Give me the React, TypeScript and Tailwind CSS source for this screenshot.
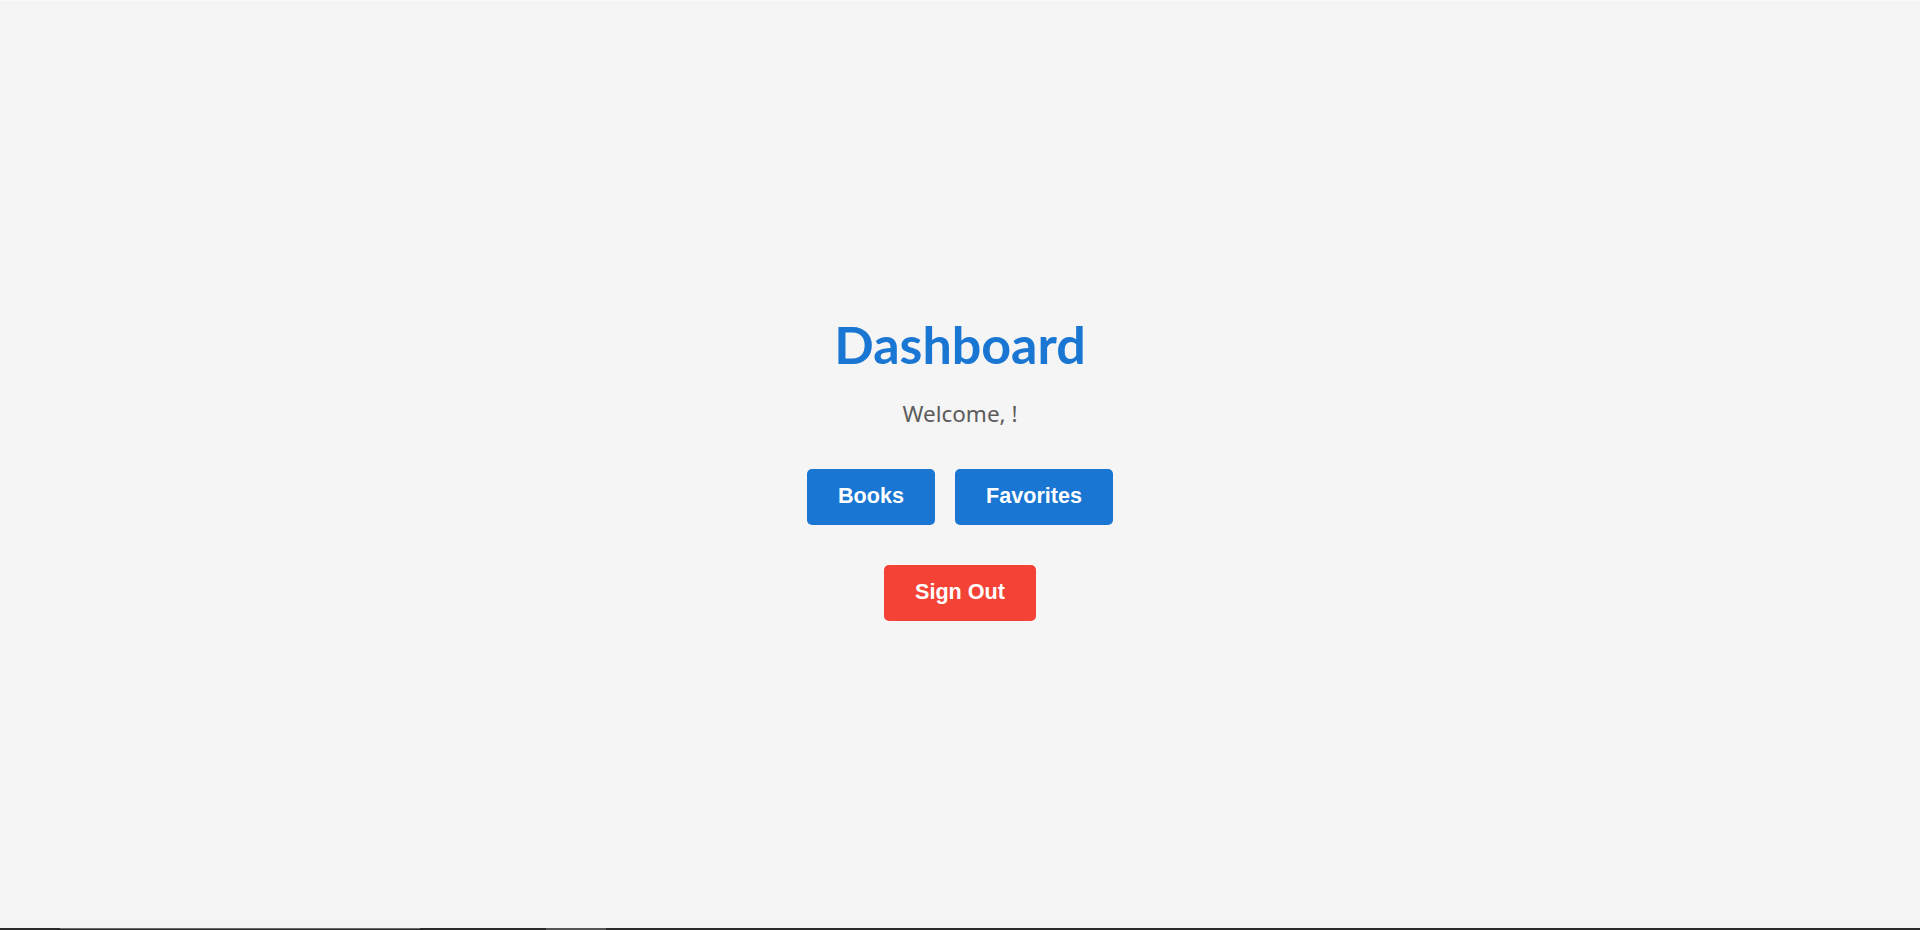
import React from "react";

export default function App() {
  return (
    <div className="w-[1920px] h-[930px] bg-[#f5f5f5] flex flex-col overflow-hidden">
      <div className="h-px bg-[#fafafa]" />
      <div className="flex-1 flex flex-col items-center justify-center pt-[4px]">
        <h1
          className="text-[52px] leading-[62px] font-bold text-[#1976d2]"
          style={{ fontFamily: 'Lato, "Noto Sans", sans-serif' }}
        >
          Dashboard
        </h1>
        <p
          className="mt-[24px] text-[22.5px] leading-[30px] text-[#5c5c5c]"
          style={{ fontFamily: '"Noto Sans", "Open Sans", sans-serif' }}
        >
          Welcome, !
        </p>
        <div
          className="mt-[40px] flex gap-[20px]"
          style={{ fontFamily: '"Liberation Sans", Arial, sans-serif' }}
        >
          <button className="h-[56px] px-[31px] rounded-[5px] bg-[#1976d2] text-white font-bold text-[21.6px]">
            Books
          </button>
          <button className="h-[56px] px-[31px] rounded-[5px] bg-[#1976d2] text-white font-bold text-[21.6px]">
            Favorites
          </button>
        </div>
        <button
          className="mt-[40px] h-[56px] px-[31px] rounded-[5px] bg-[#f44336] text-white font-bold text-[21.6px]"
          style={{ fontFamily: '"Liberation Sans", Arial, sans-serif' }}
        >
          Sign Out
        </button>
      </div>
      <div className="h-[2px] flex bg-[#2b2b2b]">
        <div className="w-[60px]" />
        <div className="w-[360px] border-t border-[#6a6a6a]" />
        <div className="w-[126px]" />
        <div className="w-[60px] bg-[#555555]" />
        <div className="flex-1" />
      </div>
    </div>
  );
}
